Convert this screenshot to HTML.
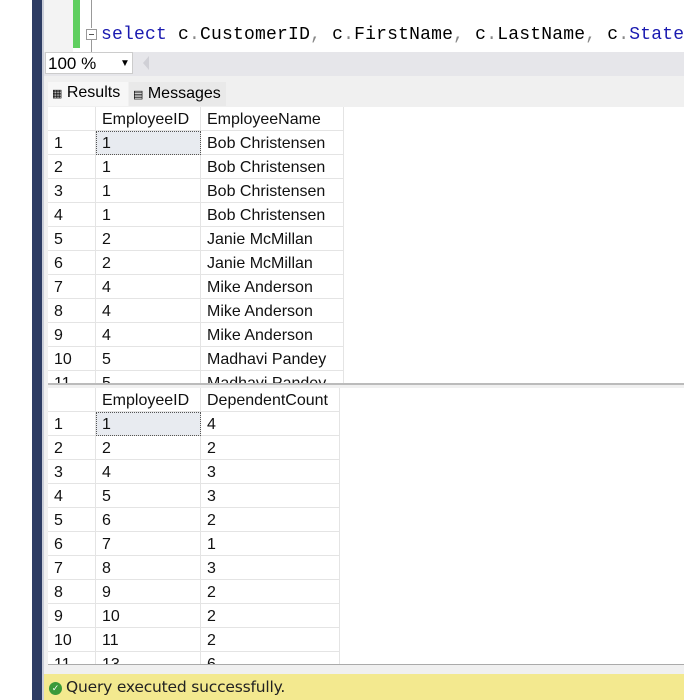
<!DOCTYPE html>
<html><head><style>
*{margin:0;padding:0;box-sizing:border-box}
body{width:684px;height:700px;background:#fff;position:relative;overflow:hidden;font-family:"Liberation Sans",sans-serif}
.a{position:absolute}
.grid{position:absolute;left:48px;background:#fff;overflow:hidden}
.row{position:absolute;left:0;height:24px;font-size:16px;color:#111}
.row div{position:absolute;top:0;height:24px;line-height:26px;padding-left:6px;border-right:1px solid #e4e4e4;border-bottom:1px solid #e4e4e4}
</style></head><body>
<div class="a" style="left:32px;top:0;width:10px;height:700px;background:#2d3c63"></div>
<div class="a" style="left:42px;top:0;width:2px;height:700px;background:#c9cdd8"></div>
<div class="a" style="left:44px;top:0;width:640px;height:52px;background:#fff"></div>
<div class="a" style="left:44px;top:0;width:29px;height:52px;background:#f3f3f3"></div>
<div class="a" style="left:73px;top:0;width:7px;height:48px;background:#5fcf5f"></div>
<div class="a" style="left:91px;top:0;width:1px;height:28px;background:#999"></div>
<div class="a" style="left:86px;top:29px;width:11px;height:11px;border:1px solid #999;background:#fff"><div class="a" style="left:2px;top:4px;width:5px;height:1px;background:#555"></div></div>
<div class="a" style="left:91px;top:40px;width:1px;height:12px;background:#999"></div>
<div class="a" style="left:101px;top:25px;font-family:'Liberation Mono',monospace;font-size:18px;white-space:nowrap;color:#000;letter-spacing:0.2px"><span style="color:#1a1ab0">select</span> c<span style="color:#888">.</span>CustomerID<span style="color:#888">,</span> c<span style="color:#888">.</span>FirstName<span style="color:#888">,</span> c<span style="color:#888">.</span>LastName<span style="color:#888">,</span> c<span style="color:#888">.</span><span style="color:#1a1ab0">State</span></div>
<div class="a" style="left:44px;top:52px;width:640px;height:24px;background:#e6e6ea"></div>
<div class="a" style="left:45px;top:52px;width:88px;height:22px;background:#fff;border:1px solid #ccc;font-size:17px;line-height:21px;padding-left:2px">100 %<span style="position:absolute;left:74px;top:0;font-size:10px">▼</span></div>
<div class="a" style="left:143px;top:56px;width:0;height:0;border-top:7px solid transparent;border-bottom:7px solid transparent;border-right:6px solid #d0d0d6"></div>
<div class="a" style="left:44px;top:76px;width:640px;height:600px;background:#f0f0f0"></div>
<div class="a" style="left:48px;top:82px;width:80px;height:24px;background:#f7f7f7;font-size:16px;line-height:21px;padding-left:4px;border-bottom:1px solid #f7f7f7"><span style="font-size:11px">▦</span> Results</div>
<div class="a" style="left:129px;top:82px;width:97px;height:24px;background:#e9e9e9;font-size:16px;line-height:23px;padding-left:4px"><span style="font-size:11px">▤</span> Messages</div>

<div class="grid" style="top:107px;width:636px;height:276px">
<div class="row" style="top:0"><div style="left:0;width:48px"></div><div style="left:48px;width:105px">EmployeeID</div><div style="left:153px;width:143px">EmployeeName</div></div>
<div class="row" style="top:24px"><div style="left:0;width:48px">1</div><div style="left:48px;width:105px;background:#e8ebf0;outline:1px dotted #555;outline-offset:-1px">1</div><div style="left:153px;width:143px">Bob Christensen</div></div>
<div class="row" style="top:48px"><div style="left:0;width:48px">2</div><div style="left:48px;width:105px">1</div><div style="left:153px;width:143px">Bob Christensen</div></div>
<div class="row" style="top:72px"><div style="left:0;width:48px">3</div><div style="left:48px;width:105px">1</div><div style="left:153px;width:143px">Bob Christensen</div></div>
<div class="row" style="top:96px"><div style="left:0;width:48px">4</div><div style="left:48px;width:105px">1</div><div style="left:153px;width:143px">Bob Christensen</div></div>
<div class="row" style="top:120px"><div style="left:0;width:48px">5</div><div style="left:48px;width:105px">2</div><div style="left:153px;width:143px">Janie McMillan</div></div>
<div class="row" style="top:144px"><div style="left:0;width:48px">6</div><div style="left:48px;width:105px">2</div><div style="left:153px;width:143px">Janie McMillan</div></div>
<div class="row" style="top:168px"><div style="left:0;width:48px">7</div><div style="left:48px;width:105px">4</div><div style="left:153px;width:143px">Mike Anderson</div></div>
<div class="row" style="top:192px"><div style="left:0;width:48px">8</div><div style="left:48px;width:105px">4</div><div style="left:153px;width:143px">Mike Anderson</div></div>
<div class="row" style="top:216px"><div style="left:0;width:48px">9</div><div style="left:48px;width:105px">4</div><div style="left:153px;width:143px">Mike Anderson</div></div>
<div class="row" style="top:240px"><div style="left:0;width:48px">10</div><div style="left:48px;width:105px">5</div><div style="left:153px;width:143px">Madhavi Pandey</div></div>
<div class="row" style="top:264px"><div style="left:0;width:48px">11</div><div style="left:48px;width:105px">5</div><div style="left:153px;width:143px">Madhavi Pandey</div></div>
</div>
<div class="a" style="left:48px;top:383px;width:636px;height:2px;background:#bbb"></div>

<div class="grid" style="top:388px;width:636px;height:276px">
<div class="row" style="top:0"><div style="left:0;width:48px"></div><div style="left:48px;width:105px">EmployeeID</div><div style="left:153px;width:139px">DependentCount</div></div>
<div class="row" style="top:24px"><div style="left:0;width:48px">1</div><div style="left:48px;width:105px;background:#e8ebf0;outline:1px dotted #555;outline-offset:-1px">1</div><div style="left:153px;width:139px">4</div></div>
<div class="row" style="top:48px"><div style="left:0;width:48px">2</div><div style="left:48px;width:105px">2</div><div style="left:153px;width:139px">2</div></div>
<div class="row" style="top:72px"><div style="left:0;width:48px">3</div><div style="left:48px;width:105px">4</div><div style="left:153px;width:139px">3</div></div>
<div class="row" style="top:96px"><div style="left:0;width:48px">4</div><div style="left:48px;width:105px">5</div><div style="left:153px;width:139px">3</div></div>
<div class="row" style="top:120px"><div style="left:0;width:48px">5</div><div style="left:48px;width:105px">6</div><div style="left:153px;width:139px">2</div></div>
<div class="row" style="top:144px"><div style="left:0;width:48px">6</div><div style="left:48px;width:105px">7</div><div style="left:153px;width:139px">1</div></div>
<div class="row" style="top:168px"><div style="left:0;width:48px">7</div><div style="left:48px;width:105px">8</div><div style="left:153px;width:139px">3</div></div>
<div class="row" style="top:192px"><div style="left:0;width:48px">8</div><div style="left:48px;width:105px">9</div><div style="left:153px;width:139px">2</div></div>
<div class="row" style="top:216px"><div style="left:0;width:48px">9</div><div style="left:48px;width:105px">10</div><div style="left:153px;width:139px">2</div></div>
<div class="row" style="top:240px"><div style="left:0;width:48px">10</div><div style="left:48px;width:105px">11</div><div style="left:153px;width:139px">2</div></div>
<div class="row" style="top:264px"><div style="left:0;width:48px">11</div><div style="left:48px;width:105px">13</div><div style="left:153px;width:139px">6</div></div>
</div>
<div class="a" style="left:48px;top:664px;width:636px;height:1px;background:#aaa"></div>

<div class="a" style="left:44px;top:674px;width:640px;height:26px;background:#f3e98f"></div>
<div class="a" style="left:49px;top:682px;width:13px;height:13px;border-radius:50%;background:#3a9a3a;color:#fff;font-size:9px;line-height:13px;text-align:center">✓</div>
<div class="a" style="left:66px;top:678px;font-family:'DejaVu Sans',sans-serif;font-size:15.5px;color:#222;letter-spacing:-0.2px">Query executed successfully.</div>
</body></html>
